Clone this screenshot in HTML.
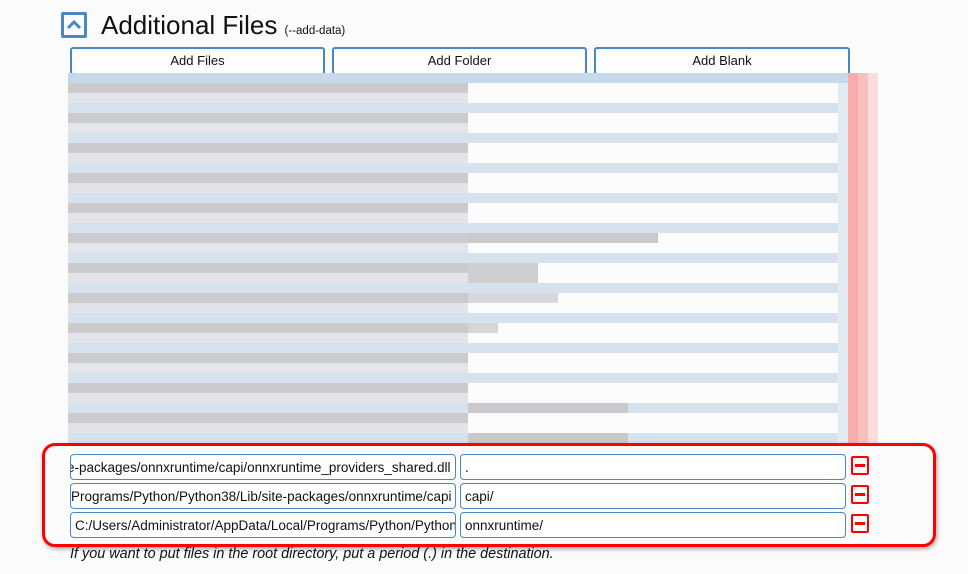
<!DOCTYPE html>
<html><head><meta charset="utf-8"><style>
body{margin:0;width:968px;height:574px;background:#fbfbfb;font-family:"Liberation Sans",sans-serif;position:relative;overflow:hidden;color:#111}
.a{position:absolute}
.btn{position:absolute;top:47px;height:24px;border:2px solid #4a88c4;border-radius:3px;background:#fdfdfd;font-size:13px;text-align:center;line-height:24px;box-sizing:content-box}
.inp{position:absolute;height:26px;border:1px solid #4a88c4;border-radius:4px;background:#fff;font-size:13.5px;line-height:26px;padding-left:4px;overflow:hidden;white-space:nowrap;box-sizing:border-box}
.min{position:absolute;left:851px;width:14px;height:15px;border:2px solid #f00;border-radius:2px}
.min:after{content:"";position:absolute;left:2px;top:6px;width:10px;height:3px;background:#f00}
</style></head><body>
<div class="a" style="left:61px;top:12px;width:20px;height:20px;border:3px solid #4a88c4;border-radius:2px"></div>
<svg class="a" style="left:64px;top:15px" width="20" height="20"><path d="M4 13 L10 7 L16 13" stroke="#4a88c4" stroke-width="3" fill="none"/></svg>
<div class="a" style="left:101px;top:10px;font-size:26px">Additional Files <span style="font-size:11.5px">(--add-data)</span></div>
<div class="btn" style="left:70px;width:251px">Add Files</div>
<div class="btn" style="left:332px;width:251px">Add Folder</div>
<div class="btn" style="left:594px;width:252px">Add Blank</div>
<div class="a" style="left:68px;top:83px;width:780px;height:364px;background:linear-gradient(#fcfcfc 0 20px,#d6e3ee 20px 30px) 0 0/100% 30px repeat-y"></div>
<div class="a" style="left:68px;top:73px;width:780px;height:10px;background:#c5d9ea"></div>
<div class="a" style="left:68px;top:83px;width:400px;height:364px;background:linear-gradient(#cbcacc 0 10px,#e3e4ea 10px 20px,#d6e3ee 20px 30px) 0 0/100% 30px repeat-y"></div>
<div class="a" style="left:468px;top:233px;width:190px;height:10px;background:#c9c8ca"></div>
<div class="a" style="left:468px;top:263px;width:70px;height:20px;background:#cfcfd2"></div>
<div class="a" style="left:468px;top:293px;width:90px;height:10px;background:#d8d8da"></div>
<div class="a" style="left:468px;top:323px;width:30px;height:10px;background:#d6d6d6"></div>
<div class="a" style="left:468px;top:403px;width:160px;height:10px;background:#c9c9cb"></div>
<div class="a" style="left:468px;top:433px;width:160px;height:10px;background:#c9c9cb"></div>
<div class="a" style="left:838px;top:83px;width:10px;height:364px;background:#e2eaf2"></div>
<div class="a" style="left:848px;top:73px;width:10px;height:374px;background:#f9acac"></div>
<div class="a" style="left:858px;top:73px;width:10px;height:374px;background:#f9c0c0"></div>
<div class="a" style="left:868px;top:73px;width:10px;height:374px;background:#fadcdc"></div>
<div class="a" style="left:42px;top:443px;width:888px;height:98px;border:3px solid #f00;border-radius:13px;box-shadow:1px 2px 4px rgba(0,0,0,.35);background:#fbfbfb"></div>
<div class="inp" style="left:70px;top:454px;width:386px;text-indent:-8px">e-packages/onnxruntime/capi/onnxruntime_providers_shared.dll</div>
<div class="inp" style="left:460px;top:454px;width:386px">.</div>
<div class="inp" style="left:70px;top:483px;width:386px;text-indent:-4px">Programs/Python/Python38/Lib/site-packages/onnxruntime/capi</div>
<div class="inp" style="left:460px;top:483px;width:386px">capi/</div>
<div class="inp" style="left:70px;top:512px;width:386px">C:/Users/Administrator/AppData/Local/Programs/Python/Python38</div>
<div class="inp" style="left:460px;top:512px;width:386px">onnxruntime/</div>
<div class="min" style="top:456px"></div>
<div class="min" style="top:485px"></div>
<div class="min" style="top:514px"></div>
<div class="a" style="left:70px;top:546px;font-size:14.4px;font-style:italic">If you want to put files in the root directory, put a period (.) in the destination.</div>
</body></html>
